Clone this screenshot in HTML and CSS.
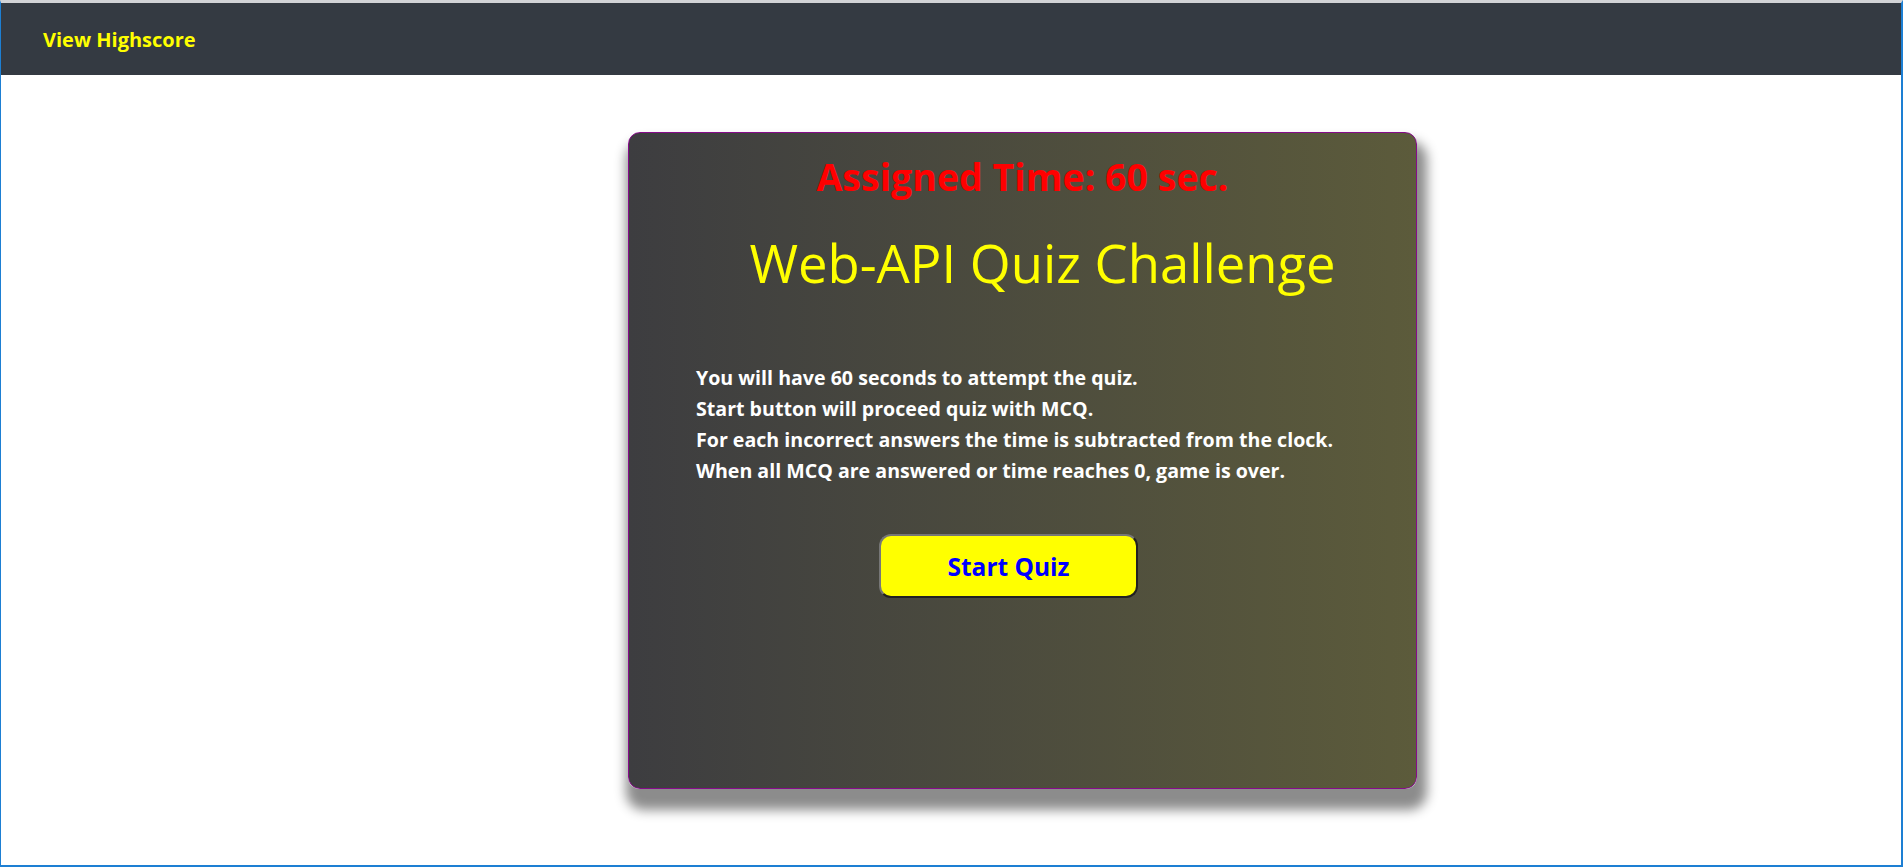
FILE: index.html
```html
<!DOCTYPE html>
<html lang="en">
<head>
<meta charset="utf-8">
<title>Web-API Quiz Challenge</title>
<link rel="stylesheet" href="styles.css">
</head>
<body>
<div class="frame">
  <header class="navbar">
    <a class="highscore-link" href="#">View Highscore</a>
  </header>
  <main class="stage">
    <section class="card">
      <div class="timer">Assigned Time: 60 sec.</div>
      <h1 class="title">Web-API Quiz Challenge</h1>
      <div class="rules">
        <p>You will have 60 seconds to attempt the quiz.</p>
        <p>Start button will proceed quiz with MCQ.</p>
        <p>For each incorrect answers the time is subtracted from the clock.</p>
        <p>When all MCQ are answered or time reaches 0, game is over.</p>
      </div>
      <button class="start-btn" type="button">Start Quiz</button>
    </section>
  </main>
</div>
</body>
</html>
```
FILE: styles.css
```css
html, body {
  margin: 0;
  padding: 0;
  background: #ffffff;
}

body {
  font-family: "Open Sans", "Noto Sans", "Liberation Sans", sans-serif;
}

.frame {
  box-sizing: border-box;
  height: 867px;
  border-top: 3px solid #d2d3d6;
  border-left: 1px solid #1d7fd3;
  border-right: 2px solid #1d7fd3;
  border-bottom: 2px solid #1d7fd3;
  overflow: hidden;
}

.navbar {
  height: 72px;
  background: #343a42;
  display: flex;
  align-items: center;
  padding-left: 42px;
}

.highscore-link {
  color: #ffff00;
  font-weight: 700;
  font-size: 20px;
  text-decoration: none;
}

.stage {
  padding-top: 57px;
  padding-left: 627px;
}

.card {
  box-sizing: border-box;
  width: 789px;
  height: 657px;
  border: 1px solid #860b8a;
  border-radius: 12px;
  background: linear-gradient(to right, #3d3d40, #5c5b3b);
  box-shadow: 4px 15px 12px 6px #8c8c8c;
  display: flex;
  flex-direction: column;
}

.timer {
  margin-top: 22px;
  text-align: center;
  color: #ff0000;
  font-weight: 700;
  font-size: 37.5px;
  line-height: 44px;
}

.title {
  margin: 32px 0 0 0;
  padding-left: 40px;
  text-align: center;
  color: #ffff00;
  font-weight: 400;
  font-size: 52.6px;
  line-height: 64px;
}

.rules {
  margin-top: 67px;
  padding-left: 67px;
}

.rules p {
  margin: 0;
  color: #ffffff;
  font-weight: 700;
  font-size: 19.6px;
  line-height: 31px;
}

.start-btn {
  box-sizing: border-box;
  align-self: flex-start;
  margin-top: 48px;
  margin-left: 250px;
  width: 259px;
  height: 64px;
  background: #ffff00;
  color: #0000ff;
  font-family: inherit;
  font-weight: 700;
  font-size: 24.5px;
  border: 2px outset #767676;
  border-radius: 12px;
  cursor: pointer;
}
```
